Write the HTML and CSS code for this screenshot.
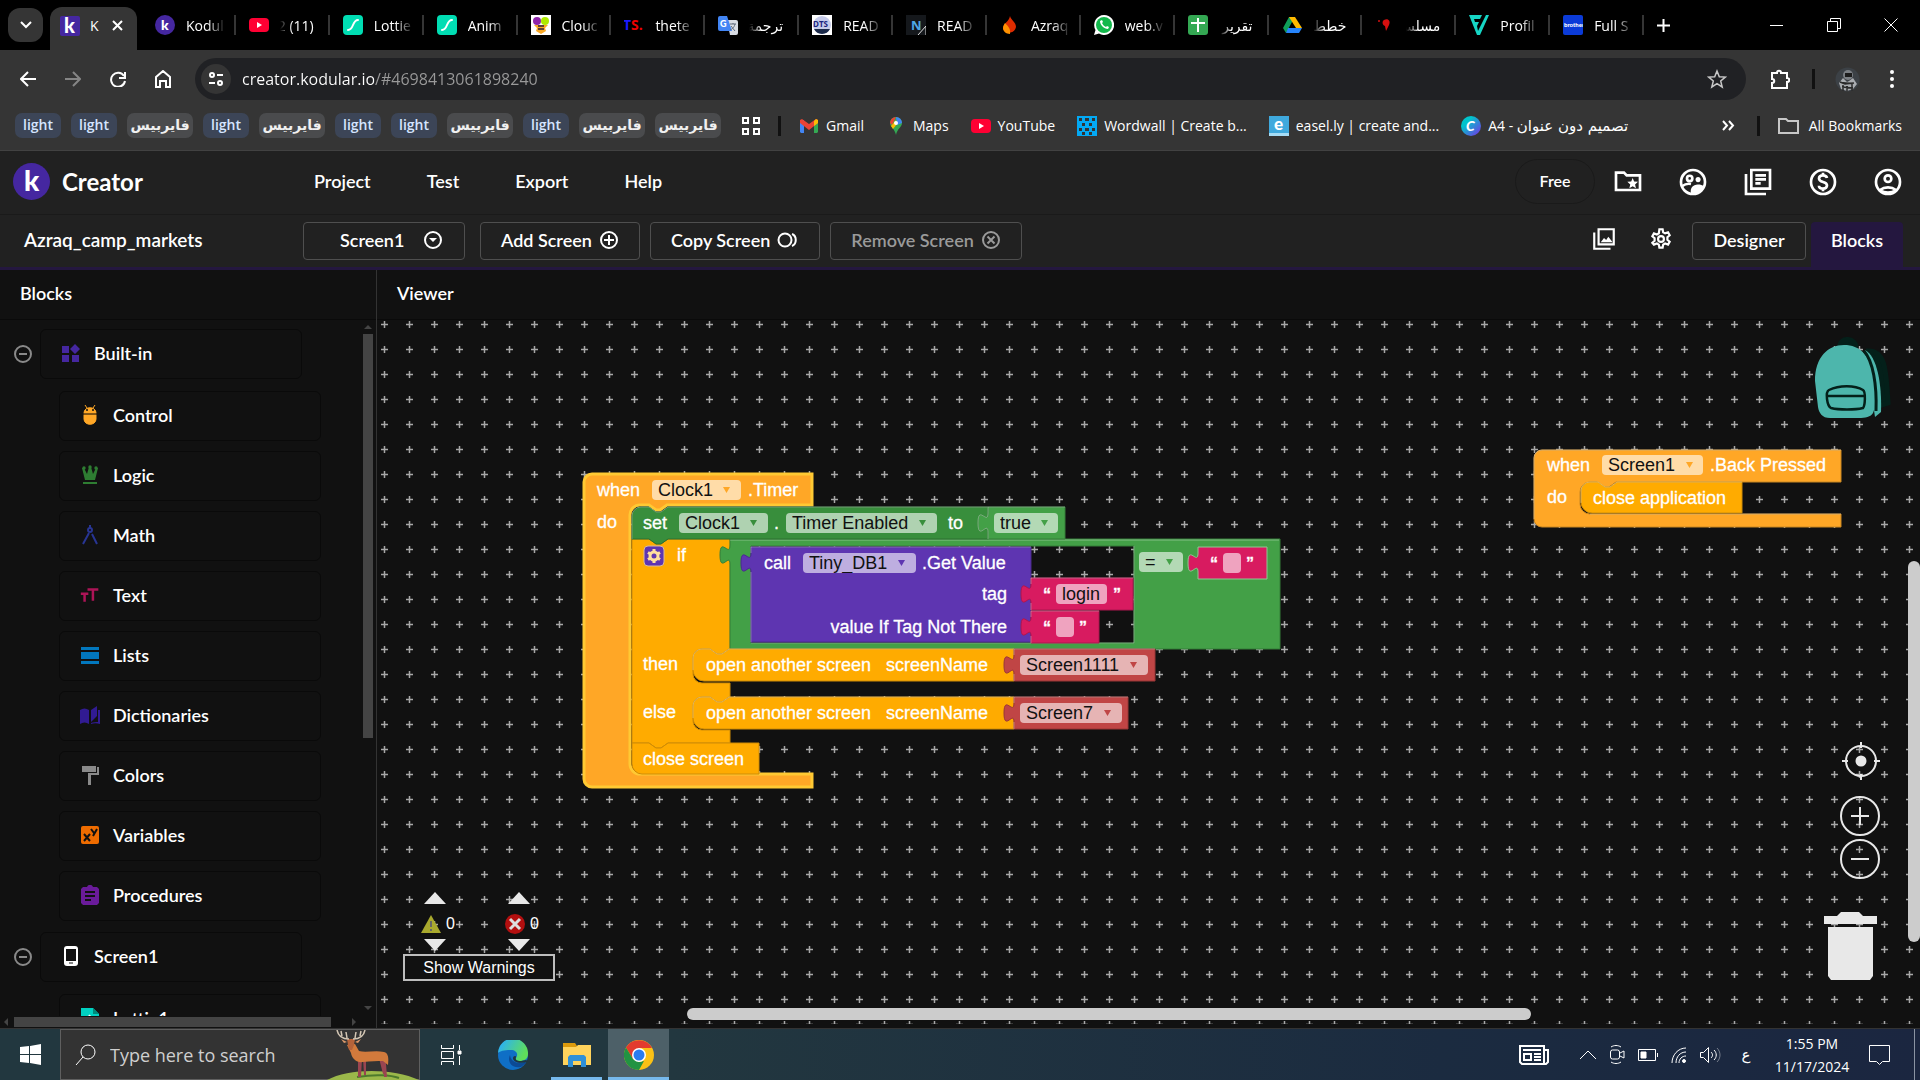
FILE: index.html
```html
<!DOCTYPE html>
<html lang="en">
<head>
  <meta charset="UTF-8">
  <meta name="viewport" content="width=device-width, initial-scale=1.0">
  <title>Kodular Creator</title>
  <link rel="stylesheet" href="styles.css">
</head>
<body>

  <!-- Browser tabs -->
  <div class="tabstrip">
    <button class="tab-search" aria-label="Search tabs"><svg width="12" height="8" viewBox="0 0 12 8" class="line"><path d="M1 1l5 5 5-5"/></svg></button>
    <button class="tab active">
      <svg width="20" height="20" viewBox="0 0 20 20"><rect width="20" height="20" rx="2" fill="#4527a0"/><text x="4" y="17" class="mark" font-size="20">k</text></svg>
      <span class="tab-title">K</span>
      <svg width="11" height="11" viewBox="0 0 11 11" class="line"><path d="M1 1l9 9M10 1l-9 9"/></svg>
    </button>
    <div class="tabs">
      <button class="tab"><svg width="20" height="20" viewBox="0 0 20 20"><circle cx="10" cy="10" r="10" fill="#4527a0"/><text x="6" y="15" class="mark" font-size="14">k</text></svg><span class="tab-title">Kodul</span></button>
      <button class="tab"><svg width="20" height="20" viewBox="0 0 20 20"><rect y="3" width="20" height="14" rx="4" fill="#ff0033"/><path d="M8 7l5 3-5 3z" fill="#fff"/></svg><span class="tab-title rtl"><bdi>2 (11)</bdi></span></button>
      <button class="tab"><svg width="20" height="20" viewBox="0 0 20 20"><rect width="20" height="20" rx="4" fill="#00ddb3"/><path d="M5 15c6 0 4-10 10-10" stroke="#fff" stroke-width="2" stroke-linecap="round" fill="none"/></svg><span class="tab-title">Lottie</span></button>
      <button class="tab"><svg width="20" height="20" viewBox="0 0 20 20"><rect width="20" height="20" rx="4" fill="#00ddb3"/><path d="M5 15c6 0 4-10 10-10" stroke="#fff" stroke-width="2" stroke-linecap="round" fill="none"/></svg><span class="tab-title">Anim</span></button>
      <button class="tab"><svg width="20" height="20" viewBox="0 0 20 20"><rect width="20" height="20" fill="#fff"/><circle cx="6" cy="6" r="4" fill="#8e24aa"/><circle cx="14" cy="6" r="4" fill="#aeea00"/><path d="M3 10h14l-3 3 1 3-5 3-5-3 1-3z" fill="#f9a825"/><path d="M7 11h6M7 14h6" stroke="#5d4037" stroke-width="2"/></svg><span class="tab-title">Clouc</span></button>
      <button class="tab"><svg width="20" height="20" viewBox="0 0 20 20"><text x="-1" y="15" font-size="14" font-weight="bold" fill="#1a1aff">T</text><text x="7" y="15" font-size="14" font-weight="bold" fill="#e00">S.</text></svg><span class="tab-title">thete</span></button>
      <button class="tab"><svg width="20" height="20" viewBox="0 0 20 20"><path d="M9 5h9a2 2 0 0 1 2 2v11a2 2 0 0 1-2 2h-6z" fill="#d8dce3"/><path d="M2 1h7l5 15H2a2 2 0 0 1-2-2V3a2 2 0 0 1 2-2z" fill="#4285f4"/><text x="2" y="12" class="mark" font-size="9">G</text><path d="M12 9h6M15 8v1M17 9c-1 4-3 5-5 6M13 11l4 5" stroke="#5f6b7a" fill="none"/></svg><span class="tab-title rtl"><bdi>ترجمة</bdi></span></button>
      <button class="tab"><svg width="20" height="20" viewBox="0 0 20 20"><rect width="20" height="20" fill="#fff"/><circle cx="10" cy="10" r="9" fill="#c5cae9"/><path d="M2 14h16a9 9 0 0 1-16 0z" fill="#1b2a4a"/><text x="1" y="12" font-size="8" font-weight="bold" fill="#1a237e">DTS</text></svg><span class="tab-title">READ</span></button>
      <button class="tab"><svg width="20" height="20" viewBox="0 0 20 20"><rect width="20" height="20" fill="#15181c"/><text x="5" y="15" font-size="13" font-weight="bold" fill="#4fa8e8">N</text><path d="M12 20l8-9v9" stroke="#ddd" fill="none"/></svg><span class="tab-title">READ</span></button>
      <button class="tab"><svg width="20" height="20" viewBox="0 0 20 20"><path d="M10 1c1 4 6 6 6 11a7 7 0 0 1-13 2c0-6 6-7 7-13z" fill="#dd2c00"/><path d="M5 8c3 3 6 6 5 11-4 0-7-3-7-6 0-2 1-3 2-5z" fill="#ff9100"/></svg><span class="tab-title">Azraq</span></button>
      <button class="tab"><svg width="20" height="20" viewBox="0 0 20 20"><path d="M10 0a10 10 0 1 1-5 18.600L0 20l1.500-5A10 10 0 0 1 10 0z" fill="#fff"/><circle cx="10" cy="10" r="8" fill="#12b84b"/><path d="M6 6c0 4 4 8 8 8l1-2-2-1-1 1c-2-1-3-2-4-4l1-1-1-2z" fill="#fff"/></svg><span class="tab-title">web.v</span></button>
      <button class="tab"><svg width="20" height="20" viewBox="0 0 20 20"><rect width="20" height="20" rx="3" fill="#34a853"/><path d="M10 3v14M3 8h14" stroke="#fff" stroke-width="2"/></svg><span class="tab-title rtl"><bdi>تقرير</bdi></span></button>
      <button class="tab"><svg width="20" height="20" viewBox="0 0 20 20"><path d="M7 2h6l-3 5-6 11-3-5z" fill="#0f9d58"/><path d="M7 2h6l7 11h-6z" fill="#ffba00"/><path d="M6 13h14l-3 5H4z" fill="#2684fc"/></svg><span class="tab-title rtl"><bdi>خطط</bdi></span></button>
      <button class="tab"><svg width="20" height="20" viewBox="0 0 20 20"><path d="M9 5c4-2 7 1 5 5l-3 6-1-5c-3-1-3-5-1-6z" fill="#d50f0f"/><circle cx="4" cy="6" r="1" fill="#d50f0f"/></svg><span class="tab-title rtl"><bdi>مسلس</bdi></span></button>
      <button class="tab"><svg width="20" height="20" viewBox="0 0 20 20"><path d="M0 0h13l-2 4H5l1 3h4l-2 4 1 5 8-16h3l-9 20H8z" fill="#16d6c5"/></svg><span class="tab-title">Profil</span></button>
      <button class="tab"><svg width="20" height="20" viewBox="0 0 20 20"><rect width="20" height="20" rx="2" fill="#0b3bd8"/><text x="1" y="12" class="mark" font-size="6">brother</text></svg><span class="tab-title">Full S</span></button>
    </div>
    <button class="new-tab" aria-label="New tab"><svg width="13" height="13" viewBox="0 0 13 13" class="line"><path d="M6.500 0v13M0 6.500h13"/></svg></button>
    <div class="window-buttons">
      <button aria-label="Minimize"><svg width="13" height="13" viewBox="0 0 13 13" class="thin"><path d="M0 6.500h13"/></svg></button>
      <button aria-label="Restore"><svg width="14" height="14" viewBox="0 0 14 14" class="thin"><path d="M.5 3.500h10v10H.5zM3.500 3V.5h10v10H11"/></svg></button>
      <button aria-label="Close"><svg width="14" height="14" viewBox="0 0 14 14" class="thin"><path d="M.5.5l13 13M13.500.5l-13 13"/></svg></button>
    </div>
  </div>

  <!-- Address bar -->
  <div class="toolbar">
    <button class="nav-btn" aria-label="Back"><svg width="16" height="16" viewBox="0 0 16 16" class="line"><path d="M16 8H2M8 1L1 8l7 7"/></svg></button>
    <button class="nav-btn dim" aria-label="Forward"><svg width="16" height="16" viewBox="0 0 16 16" class="line"><path d="M0 8h14M8 1l7 7-7 7"/></svg></button>
    <button class="nav-btn" aria-label="Reload"><svg width="16" height="16" viewBox="0 0 16 16" class="line"><path d="M14 5a7 7 0 1 0 1 5M15 1v6H9"/></svg></button>
    <button class="nav-btn" aria-label="Home"><svg width="16" height="18" viewBox="0 0 16 18" class="line"><path d="M1 7l7-6 7 6v10h-4v-6H5v6H1z"/></svg></button>
    <div class="omnibox">
      <button class="site-info" aria-label="Site information"><svg width="16" height="16" viewBox="0 0 16 16" class="line"><circle cx="4" cy="4" r="2"/><path d="M9 4h6M1 12h6"/><circle cx="12" cy="12" r="2"/></svg></button>
      <input class="url" type="text" aria-label="Address" value="creator.kodular.io/#4698413061898240">
      <button class="bare" aria-label="Bookmark"><svg width="20" height="20" viewBox="0 0 20 20" class="line star"><path d="M10 2l2.300 5.700 6 .4-4.600 3.900 1.500 6-5.200-3.300L4.800 18l1.500-6L1.700 8.100l6-.4z"/></svg></button>
    </div>
    <button class="bare ext" aria-label="Extensions"><svg width="20" height="21" viewBox="0 0 20 21" class="line"><path d="M2 4h5c0-3 4-3 4 0h6v5c3 0 3 4 0 4v6H2v-5c3 0 3-4 0-4z"/></svg></button>
    <span class="divider"></span>
    <button class="bare avatar" aria-label="Profile"><svg width="25" height="25" viewBox="0 0 25 25"><circle cx="12.500" cy="12.500" r="12" fill="#3c4146"/><path d="M4 16l4-5 4 4 2-1 4-3 4 6-4 5-6 2-6-2z" fill="#a9acb0"/><circle cx="13" cy="8" r="5" fill="#7b7f84"/><path d="M10 6h7v4h-7z" fill="#1c1c1c"/><path d="M8 24v-6M12 24v-5M17 24v-7M5 15l5 2 9-1M7 20l11 1" stroke="#2b2b2b" stroke-width="1.500"/></svg></button>
    <button class="bare" aria-label="Menu"><svg width="6" height="20" viewBox="0 0 6 20" fill="#fff"><circle cx="3" cy="3" r="2"/><circle cx="3" cy="10" r="2"/><circle cx="3" cy="17" r="2"/></svg></button>
  </div>

  <!-- Bookmarks -->
  <nav class="bookmarks">
    <a href="#" class="chip">light</a>
    <a href="#" class="chip">light</a>
    <a href="#" class="chip ar">فايربيس</a>
    <a href="#" class="chip">light</a>
    <a href="#" class="chip ar">فايربيس</a>
    <a href="#" class="chip">light</a>
    <a href="#" class="chip">light</a>
    <a href="#" class="chip ar">فايربيس</a>
    <a href="#" class="chip">light</a>
    <a href="#" class="chip ar">فايربيس</a>
    <a href="#" class="chip ar">فايربيس</a>
    <a href="#" class="apps" aria-label="Apps"><svg width="18" height="18" viewBox="0 0 18 18" class="line"><path d="M1 1h5v5H1zM12 1h5v5h-5zM1 12h5v5H1zM12 12h5v5h-5z"/></svg></a>
    <span class="divider"></span>
    <a href="#" class="bookmark"><svg width="20" height="20" viewBox="0 0 20 20"><path d="M1 4h4v13H2l-1-1z" fill="#4285f4"/><path d="M15 6l4-2v12l-1 1h-3z" fill="#34a853"/><path d="M1 4l2-1 7 5 7-5 2 1v3l-9 7-9-7z" fill="#ea4335"/><path d="M15 5l2-2 2 1v3l-4 3z" fill="#fbbc04"/></svg>Gmail</a>
    <a href="#" class="bookmark"><svg width="20" height="20" viewBox="0 0 20 20"><path d="M10 1a6 6 0 0 1 6 6c0 4-5 6-6 12C9 13 4 11 4 7a6 6 0 0 1 6-6z" fill="#34a853"/><path d="M10 1a6 6 0 0 1 6 6l-5 2z" fill="#4285f4"/><path d="M10 1L6 9 4 7a6 6 0 0 1 6-6z" fill="#ea4335"/><path d="M5 10l5-6 1 4-4 5z" fill="#fbbc04"/><circle cx="10" cy="7" r="2" fill="#fff"/></svg>Maps</a>
    <a href="#" class="bookmark"><svg width="20" height="20" viewBox="0 0 20 20"><rect y="3" width="20" height="14" rx="4" fill="#ff0033"/><path d="M8 7l5 3-5 3z" fill="#fff"/></svg>YouTube</a>
    <a href="#" class="bookmark"><svg width="20" height="20" viewBox="0 0 20 20"><rect width="20" height="20" fill="#03a9f4"/><path d="M2 2h3v3H2zM8 2h4v3H8zM15 2h3v3h-3zM5 7h3v3H5zM12 7h3v3h-3zM2 12h3v3H2zM8 12h4v3H8zM15 12h3v3h-3zM5 16h3v3H5zM12 16h3v3h-3z" fill="#333"/></svg>Wordwall | Create b...</a>
    <a href="#" class="bookmark"><svg width="20" height="20" viewBox="0 0 20 20"><rect width="20" height="20" fill="#3fa9dd"/><path d="M0 17h20v3H0z" fill="#a6dcf5"/><text x="5" y="14" class="mark" font-size="17">e</text></svg>easel.ly | create and...</a>
    <a href="#" class="bookmark"><svg width="20" height="20" viewBox="0 0 20 20"><defs><linearGradient id="canva" x1="0" y1="0" x2="1" y2="1"><stop offset=".3" stop-color="#00c4cc"/><stop offset="1" stop-color="#7d2ae8"/></linearGradient></defs><circle cx="10" cy="10" r="10" fill="url(#canva)"/><text x="5" y="15" class="mark" font-style="italic" font-size="14">C</text></svg><bdi>A4 - <span class="ar-text">تصميم دون عنوان</span></bdi></a>
    <button class="bare more" aria-label="More bookmarks"><svg width="13" height="11" viewBox="0 0 13 11" class="line"><path d="M1 1l4 4.500L1 10M7 1l4 4.500L7 10"/></svg></button>
    <span class="divider"></span>
    <a href="#" class="bookmark all"><svg width="21" height="17" viewBox="0 0 21 17" class="line soft"><path d="M1 2h7l2 2h10v12H1z"/></svg>All Bookmarks</a>
  </nav>

  <!-- Kodular header -->
  <header class="app-header">
    <a href="#" class="brand">
      <svg width="37" height="37" viewBox="0 0 37 37"><circle cx="18.500" cy="18.500" r="18.500" fill="#4527a0"/><text x="11" y="28" class="mark" font-size="28">k</text></svg>
      Creator
    </a>
    <nav class="menu">
      <a href="#">Project</a>
      <a href="#">Test</a>
      <a href="#">Export</a>
      <a href="#">Help</a>
    </nav>
    <button class="plan">Free</button>
    <div class="header-icons">
      <button aria-label="My projects"><svg width="32" height="32" viewBox="0 0 24 24" class="md"><path d="M3 5h6l2 2h10v11H3z"/><path d="M15.500 9l1.100 2.700 2.900.2-2.200 1.900.7 2.800-2.500-1.500-2.500 1.500.7-2.800-2.200-1.900 2.900-.2z" class="solid"/></svg></button>
      <button aria-label="Community"><svg width="32" height="32" viewBox="0 0 24 24" class="md"><circle cx="12" cy="12" r="9"/><circle cx="9.500" cy="9.300" r="2"/><circle cx="15.800" cy="10.200" r="1.900" class="solid"/><path d="M4 15c2-1.500 4-2 6.500-1.500"/><path d="M10.500 20.500c-1-4 1.500-6.700 5.100-6.700 2 0 3.500.5 4.400 1.200-1.500 4-5 6-9.500 5.500z" class="solid"/></svg></button>
      <button aria-label="Docs"><svg width="32" height="32" viewBox="0 0 24 24" class="md"><path d="M7 3h14v14H7zM3 6v15h15M10 7h8M10 10h8M10 13h4"/></svg></button>
      <button aria-label="Monetization"><svg width="32" height="32" viewBox="0 0 24 24" class="md"><circle cx="12" cy="12" r="9"/><path d="M15 9c-.3-1.400-1.400-2-3-2s-3 .8-3 2.400c0 3.400 6 1.800 6 5.100 0 1.600-1.300 2.500-3 2.500s-3-.8-3.100-2.200M12 5v2M12 17v2"/></svg></button>
      <button aria-label="Account"><svg width="32" height="32" viewBox="0 0 24 24" class="md"><circle cx="12" cy="12" r="9"/><circle cx="12" cy="9.500" r="2.500"/><path d="M6 18c3.500-2.700 8.500-2.700 12 0-3.500 2.600-8.500 2.600-12 0z"/></svg></button>
    </div>
  </header>

  <!-- Project bar -->
  <div class="project-bar">
    <h1 class="project-name">Azraq_camp_markets</h1>
    <div class="screen-picker">
      <select aria-label="Screen"><option>Screen1</option></select>
      <svg width="20" height="20" viewBox="0 0 20 20"><circle cx="10" cy="10" r="8" fill="none" stroke="#fff" stroke-width="2"/><path d="M6 8h8l-4 4z" fill="#fff"/></svg>
    </div>
    <button class="outlined">Add Screen <svg width="20" height="20" viewBox="0 0 20 20" class="line"><circle cx="10" cy="10" r="8"/><path d="M10 5v10M5 10h10"/></svg></button>
    <button class="outlined">Copy Screen <svg width="22" height="20" viewBox="0 0 22 20" class="line"><circle cx="8" cy="10" r="6.500"/><path d="M15 4c5 2 5 10 0 12"/></svg></button>
    <button class="outlined" disabled>Remove Screen <svg width="20" height="20" viewBox="0 0 20 20" class="line"><circle cx="10" cy="10" r="8"/><path d="M6.500 6.500l7 7M13.500 6.500l-7 7"/></svg></button>
    <div class="project-tools">
      <button class="tool" aria-label="Assets"><svg width="26" height="26" viewBox="0 0 24 24" class="md"><path d="M7 3h14v14H7zM3 6v15h15"/><path d="M9 15l3-4 2 2 2-3 4 5z" class="solid"/></svg></button>
      <button class="tool" aria-label="Settings"><svg width="26" height="26" viewBox="0 0 24 24" class="md"><path d="M10.500 3h3l.5 2.800 1.800 1 2.700-1 1.500 2.700-2.100 1.800v2.400l2.100 1.800-1.500 2.700-2.700-1-1.800 1-.5 2.800h-3l-.5-2.800-1.800-1-2.700 1L4 15.500l2.100-1.800v-2.400L4 9.500l1.500-2.700 2.700 1 1.800-1z"/><circle cx="12" cy="12" r="2.700"/></svg></button>
      <button class="outlined designer">Designer</button>
      <button class="blocks-tab">Blocks</button>
    </div>
  </div>

  <main class="main">
    <!-- Block drawers -->
    <aside class="palette">
      <h2 class="panel-title">Blocks</h2>
      <div class="tree-wrap">
        <div class="tree">
          <div class="branch">
            <button class="collapse" aria-label="Collapse Built-in"><svg width="18" height="18" viewBox="0 0 18 18"><circle cx="9" cy="9" r="8"/><path d="M5 9h8"/></svg></button>
            <button class="node"><svg width="20" height="20" viewBox="0 0 20 20" fill="#4527a0"><path d="M1 3h7v7H1zM1 12h7v7H1zM11 12h7v7h-7zM14 1l5 5-5 5-5-5z"/></svg>Built-in</button>
          </div>
          <div class="leaves">
            <button class="node"><svg width="20" height="20" viewBox="0 0 20 20"><path d="M4 8c0-7 12-7 12 0zM4 10h12v4c0 7-12 7-12 0zM5 0l2 3M15 0l-2 3" fill="#ffa726" stroke="#ffa726"/><circle cx="7" cy="5" r="1" fill="#111"/><circle cx="13" cy="5" r="1" fill="#111"/><path d="M3 9h14" stroke="#7a4f10"/></svg>Control</button>
            <button class="node"><svg width="20" height="20" viewBox="0 0 20 20" fill="#2e7d32"><path d="M2 3h2l3 6 2-7h2l2 7 3-6h2l-3 12H5zM3 17h14v2H3z"/><circle cx="4" cy="3" r="1.700"/><circle cx="10" cy="2" r="1.700"/><circle cx="16" cy="3" r="1.700"/></svg>Logic</button>
            <button class="node"><svg width="20" height="20" viewBox="0 0 20 20" fill="none" stroke="#283593" stroke-width="2"><circle cx="10" cy="5" r="2"/><path d="M10 0v3M9 8L3 19M12 9l5 10"/></svg>Math</button>
            <button class="node"><svg width="20" height="20" viewBox="0 0 24 24" fill="#ad1457"><path d="M9 4v3h5v12h3V7h5V4H9zM1 12h3v8h3v-8h3V9H1z"/></svg>Text</button>
            <button class="node"><svg width="20" height="20" viewBox="0 0 20 20" fill="#0277bd"><path d="M1 2h18v3H1zM1 7h18v7H1zM1 16h18v3H1z"/></svg>Lists</button>
            <button class="node"><svg width="20" height="20" viewBox="0 0 20 20" fill="#311b92"><path d="M0 5c3-2 6-2 9 0v14c-3-2-6-2-9 0zM11 5l6-4v10l-6 6zM18 5h2v14c-3-1-6-1-9 0v-1c2-1 5-1 7-1z"/></svg>Dictionaries</button>
            <button class="node"><svg width="20" height="20" viewBox="0 0 20 20" fill="#8a8a8a"><path d="M2 1h14v6H2zM17 2h2v8h-8v10H8V8h9z"/></svg>Colors</button>
            <button class="node"><svg width="20" height="20" viewBox="0 0 20 20"><rect x="1" y="1" width="18" height="18" rx="2" fill="#ef6c00"/><path d="M4 9l6 7M10 9l-6 7M11 4l3 4M17 4l-4 7" stroke="#111" stroke-width="2"/></svg>Variables</button>
            <button class="node"><svg width="20" height="20" viewBox="0 0 20 20"><path d="M3 2h4c1-3 5-3 6 0h4l2 2v14l-2 2H3l-2-2V4z" fill="#6a1b9a"/><path d="M5 7h10M5 11h10M5 15h6" stroke="#111" stroke-width="2"/></svg>Procedures</button>
          </div>
          <div class="branch">
            <button class="collapse" aria-label="Collapse Screen1"><svg width="18" height="18" viewBox="0 0 18 18"><circle cx="9" cy="9" r="8"/><path d="M5 9h8"/></svg></button>
            <button class="node"><svg width="20" height="20" viewBox="0 0 20 20"><rect x="3" width="14" height="20" rx="3" fill="#fff"/><path d="M5 3h10v12H5z" fill="#111"/><path d="M8 17h4" stroke="#111"/></svg>Screen1</button>
          </div>
          <div class="leaves">
            <button class="node"><svg width="20" height="20" viewBox="0 0 20 20"><path d="M1 0h12l6 6v14H1z" fill="#00d1c1"/><path d="M13 0v6h6z" fill="#00897b"/><path d="M6 14l4-7" stroke="#fff" stroke-width="2"/></svg>Lottie1</button>
          </div>
        </div>
        <div class="vscroll"><span class="arrow up"></span><span class="thumb"></span><span class="arrow down"></span></div>
      </div>
      <div class="hscroll"><span class="arrow left"></span><span class="thumb"></span><span class="arrow right"></span></div>
    </aside>

    <section class="viewer">
      <h2 class="panel-title">Viewer</h2>
      <div class="workspace">
        <svg class="canvas" width="100%" height="100%">
          <defs>
            <pattern id="grid" x="-5" y="-8" width="25" height="25" patternUnits="userSpaceOnUse">
              <path d="M9 12.500h7M12.500 9v7" stroke="#a8a8a8" stroke-width="1.500"/>
            </pattern>
          </defs>
          <rect width="100%" height="100%" fill="url(#grid)"/>

          <!-- when Clock1.Timer -->
          <g transform="translate(207 154)">
            <path class="event selected" d="M8 0H228V31H83l-7 5h-4l-7-5H56a10 10 0 0 0-10 10V290a10 10 0 0 0 10 10H228V313H8a8 8 0 0 1-8-8V8a8 8 0 0 1 8-8z"/>
            <text x="13" y="22">when</text>
            <foreignObject x="68" y="6" width="89" height="20"><select class="field" aria-label="Component"><option>Clock1</option></select></foreignObject>
            <path class="caret event" d="M139 13h7l-3.500 6z"/>
            <text x="164" y="22">.Timer</text>
            <text x="13" y="54">do</text>

            <!-- if / then / else -->
            <g transform="translate(48 65)">
              <path class="control" d="M0 0H17l7 5h5l7-5H98V110H97l-7 5h-5l-7-5H70a9 9 0 0 0-9 9V135a9 9 0 0 0 9 9H98V158H97l-7 5h-5l-7-5H70a9 9 0 0 0-9 9V182a9 9 0 0 0 9 9H98V204H36l-7 5h-5l-7-5H0z"/>
              <g transform="translate(12 7)">
                <rect width="20" height="20" rx="4" fill="#5e35b1" stroke="#d7b9a0"/>
                <circle cx="10" cy="10" r="4" fill="none" stroke="#ffdf9e" stroke-width="3"/>
                <path d="M10 3v3M10 14v3M4 6.500l2.500 1.500M13.500 12l2.500 1.500M4 13.500L6.500 12M13.500 8L16 6.500" stroke="#ffdf9e" stroke-width="3"/>
              </g>
              <text x="45" y="22">if</text>

              <g transform="translate(98 0)">
                <path class="logic" fill-rule="evenodd" d="M0 0H550V110H0V25c0-12-10 10-10-9s10 3 10-10zM21 7V104H404V7z"/>
                <path class="edge" d="M404 7V104H21M0 1H549"/>
                <g transform="translate(21 8)">
                  <path class="database" d="M0 0H280V95H0V25c0-12-10 10-10-9s10 3 10-10z"/>
                  <path class="edge" d="M0 95V25M0 6V0H280"/>
                  <text x="13" y="22">call</text>
                  <foreignObject x="52" y="6" width="113" height="20"><select class="field" aria-label="Component"><option>Tiny_DB1</option></select></foreignObject>
                  <path class="caret database" d="M147 13h7l-3.500 6z"/>
                  <text x="171" y="22">.Get Value</text>
                  <text x="256" y="53" text-anchor="end">tag</text>
                  <text x="256" y="86" text-anchor="end">value If Tag Not There</text>
                  <g transform="translate(280 31)">
                    <path class="string" d="M0 0H102V32H0V25c0-12-10 10-10-9s10 3 10-10z"/>
                    <path class="edge" d="M0 32V25M0 6V0H102"/>
                    <text class="quote" x="12" y="22">“</text>
                    <foreignObject x="25" y="6" width="51" height="20"><input class="field" type="text" aria-label="Text" value="login"></foreignObject>
                    <text class="quote" x="82" y="22">”</text>
                  </g>
                  <g transform="translate(280 64)">
                    <path class="string" d="M0 0H68V32H0V25c0-12-10 10-10-9s10 3 10-10z"/>
                    <path class="edge" d="M0 32V25M0 6V0H68"/>
                    <text class="quote" x="12" y="22">“</text>
                    <foreignObject x="25" y="6" width="18" height="20"><input class="field" type="text" aria-label="Text"></foreignObject>
                    <text class="quote" x="48" y="22">”</text>
                  </g>
                </g>
                <foreignObject x="409" y="13" width="44" height="20"><select class="field" aria-label="Operator"><option>=</option></select></foreignObject>
                <path class="caret logic" d="M436 20h7l-3.500 6z"/>
                <g transform="translate(468 8)">
                  <path class="string rim" d="M0 0H69V32H0V25c0-12-10 10-10-9s10 3 10-10z"/>
                  <text class="quote" x="12" y="22">“</text>
                  <foreignObject x="25" y="6" width="18" height="20"><input class="field" type="text" aria-label="Text"></foreignObject>
                  <text class="quote" x="48" y="22">”</text>
                </g>
              </g>

              <text x="11" y="131">then</text>
              <g transform="translate(61 110)">
                <path class="control" d="M0 9a9 9 0 0 1 9-9H17l7 5h5l7-5H321V32H11a11 11 0 0 1-11-11z"/>
                <path class="edge" d="M0 21V9a9 9 0 0 1 9-9H17l7 5h5l7-5H321"/>
                <text x="13" y="22">open another screen</text>
                <text x="193" y="22">screenName</text>
                <g transform="translate(321 0)">
                  <path class="screen" d="M0 0H141V32H0V25c0-12-10 10-10-9s10 3 10-10z"/>
                  <path class="edge" d="M0 32V25M0 6V0H141"/>
                  <foreignObject x="6" y="6" width="128" height="20"><select class="field" aria-label="Screen name"><option>Screen1111</option></select></foreignObject>
                  <path class="caret screen" d="M116 13h7l-3.500 6z"/>
                </g>
              </g>

              <text x="11" y="179">else</text>
              <g transform="translate(61 158)">
                <path class="control" d="M0 9a9 9 0 0 1 9-9H17l7 5h5l7-5H321V32H11a11 11 0 0 1-11-11z"/>
                <path class="edge" d="M0 21V9a9 9 0 0 1 9-9H17l7 5h5l7-5H321"/>
                <text x="13" y="22">open another screen</text>
                <text x="193" y="22">screenName</text>
                <g transform="translate(321 0)">
                  <path class="screen" d="M0 0H114V32H0V25c0-12-10 10-10-9s10 3 10-10z"/>
                  <path class="edge" d="M0 32V25M0 6V0H114"/>
                  <foreignObject x="6" y="6" width="102" height="20"><select class="field" aria-label="Screen name"><option>Screen7</option></select></foreignObject>
                  <path class="caret screen" d="M90 13h7l-3.500 6z"/>
                </g>
              </g>
            </g>

            <!-- set Clock1.TimerEnabled -->
            <g transform="translate(48 33)">
              <path class="setter" d="M0 9a9 9 0 0 1 9-9H17l7 5h5l7-5H356V32H36l-7 5h-5l-7-5H0z"/>
              <path class="edge" d="M0 32V9a9 9 0 0 1 9-9H17l7 5h5l7-5H356"/>
              <text x="11" y="22">set</text>
              <foreignObject x="47" y="6" width="89" height="20"><select class="field" aria-label="Component"><option>Clock1</option></select></foreignObject>
              <path class="caret setter" d="M118 13h7l-3.500 6z"/>
              <text x="142" y="22">.</text>
              <foreignObject x="154" y="6" width="151" height="20"><select class="field" aria-label="Property"><option>Timer Enabled</option></select></foreignObject>
              <path class="caret setter" d="M287 13h7l-3.500 6z"/>
              <text x="316" y="22">to</text>
              <g transform="translate(356 0)">
                <path class="logic" d="M0 0H77V32H0V25c0-12-10 10-10-9s10 3 10-10z"/>
                <path class="edge" d="M0 32V25c0-12-10 10-10-9s10 3 10-10V0H77"/>
                <foreignObject x="6" y="6" width="64" height="20"><select class="field" aria-label="Value"><option>true</option></select></foreignObject>
                <path class="caret logic" d="M53 13h7l-3.500 6z"/>
              </g>
            </g>

            <g transform="translate(48 269)">
              <path class="control" d="M0 0H17l7 5h5l7-5H127V31H10a10 10 0 0 1-10-10z"/>
              <text x="11" y="22">close screen</text>
            </g>
          </g>

          <!-- when Screen1.BackPressed -->
          <g transform="translate(1157 130)">
            <path class="event" d="M8 0H307V32H82l-7 5h-5l-7-5H56a10 10 0 0 0-10 10V54a10 10 0 0 0 10 10H307V77H8a8 8 0 0 1-8-8V8a8 8 0 0 1 8-8z"/>
            <path class="edge" d="M0 69V8a8 8 0 0 1 8-8H307M56 64H307"/>
            <text x="13" y="21">when</text>
            <foreignObject x="68" y="5" width="101" height="20"><select class="field" aria-label="Component"><option>Screen1</option></select></foreignObject>
            <path class="caret event" d="M152 12h7l-3.500 6z"/>
            <text x="176" y="21">.Back Pressed</text>
            <text x="13" y="53">do</text>
            <g transform="translate(47 32)">
              <path class="control" d="M0 9a9 9 0 0 1 9-9H17l7 5h5l7-5H161V31H11a11 11 0 0 1-11-11z"/>
              <path class="edge" d="M0 21V9a9 9 0 0 1 9-9H17l7 5h5l7-5H161"/>
              <text x="12" y="22">close application</text>
            </g>
          </g>
        </svg>

        <button class="backpack" aria-label="Backpack">
          <svg width="82" height="84" viewBox="0 0 82 84">
            <path d="M26 9c0-9 16-9 16 2M52 14c20-2 20 20 22 52l-12 4" fill="#04201a" stroke="#04201a" stroke-width="5"/>
            <path d="M51 13c12 6 17 34 16 62l-6 5" fill="#4db6ac"/>
            <path d="M1 44C1 20 14 8 30 8s26 10 28 30c3 20 4 32 1 38-2 4-8 5-14 5H16C8 81 5 76 4 70z" fill="#4db6ac"/>
            <path d="M50 14c9 10 13 34 12 60" fill="none" stroke="#04201a" stroke-width="3"/>
            <path d="M15 53c10-5 26-5 34 0 3 2 2 16 0 18-8 2-24 2-32 0-4-2-6-16-2-18zM12 59h39" fill="none" stroke="#04201a" stroke-width="2.500"/>
          </svg>
        </button>

        <div class="zoom">
          <button aria-label="Center"><svg width="40" height="40" viewBox="0 0 40 40"><circle cx="21" cy="20" r="15"/><path d="M21 1v6M21 33v6M2 20h6M34 20h6"/><circle cx="21" cy="20" r="4.500" fill="#e8e8e8"/></svg></button>
          <button aria-label="Zoom in"><svg width="40" height="40" viewBox="0 0 40 40"><circle cx="20" cy="20" r="19"/><path d="M11 20h18M20 11v18"/></svg></button>
          <button aria-label="Zoom out"><svg width="40" height="40" viewBox="0 0 40 40"><circle cx="20" cy="20" r="19"/><path d="M11 20h18"/></svg></button>
        </div>

        <button class="trash" aria-label="Trash"><svg width="54" height="68" viewBox="0 0 54 68" fill="#e8e8e8"><path d="M0 4h13l4-4h18l4 4h14v8H0zM4 15h45v49l-3 4H7l-3-4z"/></svg></button>

        <div class="warnings">
          <div class="counters">
            <div class="counter">
              <button class="step up" aria-label="Previous warning"></button>
              <span class="count"><svg width="20" height="20" viewBox="0 0 20 20"><path d="M10 1l10 18H0z" fill="#a9a92e"/><path d="M10 7v6M10 15v2" stroke="#666" stroke-width="2"/></svg>0</span>
              <button class="step down" aria-label="Next warning"></button>
            </div>
            <div class="counter">
              <button class="step up" aria-label="Previous error"></button>
              <span class="count"><svg width="20" height="20" viewBox="0 0 20 20"><circle cx="10" cy="10" r="10" fill="#b30f0f"/><path d="M5 5l10 10M15 5L5 15" stroke="#ddd" stroke-width="3"/></svg>0</span>
              <button class="step down" aria-label="Next error"></button>
            </div>
          </div>
          <button class="show-warnings">Show Warnings</button>
        </div>

        <span class="bar-y"></span>
        <span class="bar-x"></span>
      </div>
    </section>
  </main>

  <!-- Windows taskbar -->
  <footer class="taskbar">
    <button class="start" aria-label="Start"><svg width="21" height="21" viewBox="0 0 21 21" fill="#fff"><path d="M0 3l9-1v8H0zM10 2l11-2v10H10zM0 11h9v8l-9-1zM10 11h11v10l-11-2z"/></svg></button>
    <label class="search">
      <svg width="22" height="22" viewBox="0 0 22 22" class="thin"><circle cx="13" cy="8" r="7"/><path d="M8 13l-7 8"/></svg>
      <input type="text" placeholder="Type here to search" aria-label="Type here to search">
      <svg class="deer" width="92" height="50" viewBox="0 0 92 50">
        <path d="M0 50c22-12 66-12 92 0z" fill="#9bb84a"/>
        <path d="M30 47c18-3 34-2 42 1" stroke="#4d7a2c" stroke-width="2" fill="none"/>
        <path d="M31 28h4l-1 19h-3zM36 28h3v17h-2zM52 28l5-2 1 18h-2zM57 26h4l-2 8 1 13h-3z" fill="#9a4550"/>
        <path d="M20 15l8-1 4 7c7 2 16-1 25 1 4 1 5 5 4 13l-5-4c-6 0-12 0-20 1-6 1-11-3-12-9z" fill="#d27a3c"/>
        <path d="M20 9h8l-1 6-2 5h-3l-1-5z" fill="#b5633a"/>
        <path d="M20 12l-6-3 3 4zM28 12l6-3-3 4z" fill="#dc9a6c"/>
        <path d="M22 9C15 9 11 5 10 0M15 6l-1-5M20 8l-1-6M26 9c7 0 11-4 12-9M33 6l1-5M28 8l1-6" stroke="#d3c6b4" stroke-width="1.500" fill="none"/>
      </svg>
    </label>
    <button class="task" aria-label="Task view"><svg width="21" height="20" viewBox="0 0 21 20" class="thin"><path d="M.5 0v3.500h12V0M.5 20v-3.500h12V20M.5 6.500h12v7H.5zM18.500 0v5M18.500 11v9"/><path d="M17 6h3v3h-3z" fill="#fff"/></svg></button>
    <button class="task" aria-label="Edge">
      <svg width="30" height="30" viewBox="0 0 30 30"><defs><linearGradient id="edge" x1="0" y1="0" x2="1" y2=".4"><stop offset=".2" stop-color="#2fb4e9"/><stop offset="1" stop-color="#5fdf5a"/></linearGradient></defs>
      <circle cx="15" cy="15" r="15" fill="#0f6fc6"/><path d="M0 13a15 15 0 0 1 30 1c0 5-4 7-8 7-3 0-5-1-4-3 3-4 0-8-5-8-6 0-11 1-13 3z" fill="url(#edge)"/><path d="M12 15c-3 6 1 14 11 12a15 15 0 0 0 6-6c-6 3-16 3-17-6z" fill="#0c4a94"/><path d="M18 17c-1 3 1 4 5 4l5-1 2 1-1 1c-8 2-14 0-14-4 0-2 3-3 3-1z" fill="#20363f"/></svg>
    </button>
    <button class="task running" aria-label="File Explorer"><svg width="28" height="24" viewBox="0 0 28 24"><path d="M0 0h12l2 3v4H0z" fill="#dc9a0c"/><path d="M0 4h13l2-2h13v20H0z" fill="#ffd35c"/><path d="M5 24V14l2-2h14l2 2v10h-5v-6h-8v6z" fill="#2f90d8"/></svg></button>
    <button class="task running focused" aria-label="Chrome"><svg width="30" height="30" viewBox="0 0 30 30"><circle cx="15" cy="15" r="15" fill="#fbc116"/><path d="M2 7.500A15 15 0 0 1 28 8H15l-6 11z" fill="#e33b2e"/><path d="M2 7.500l7 11.500 6 3 5-1-5 9A15 15 0 0 1 2 7.500z" fill="#229342"/><circle cx="15" cy="15" r="7" fill="#fff"/><circle cx="15" cy="15" r="5.500" fill="#2a7cf0"/></svg></button>

    <div class="tray">
      <button class="news" aria-label="News"><svg width="30" height="20" viewBox="0 0 30 20" class="line"><path d="M1 1h24v18H3l-2-2zM25 5h4v12l-2 2h-3"/><path d="M4 5h18M15 9h7M15 12h7M15 15h7M5 9h7v6H5z"/></svg></button>
      <button aria-label="Show hidden icons"><svg width="16" height="9" viewBox="0 0 16 9" class="thin"><path d="M0 9l8-8 8 8"/></svg></button>
      <button aria-label="Meet now"><svg width="16" height="20" viewBox="0 0 16 20" class="thin"><rect x="1.500" y="5" width="9" height="9" rx="2"/><path d="M11 8l4-2v7l-4-2M2 2c3-2 7-2 10 0M2 17c3 2 7 2 10 0"/></svg></button>
      <button aria-label="Battery"><svg width="20" height="12" viewBox="0 0 20 12" class="thin"><path d="M.5.5h17v11H.5zM19.500 4v4"/><path d="M3 3h5v6H3z" fill="#fff"/></svg></button>
      <button aria-label="Network"><svg width="16" height="16" viewBox="0 0 16 16" class="thin"><path d="M1 16C1 8 7 1 15 1M5 16c0-6 4-11 10-11M8 16c0-4 3-7 7-7"/><circle cx="13" cy="14" r="1.500" fill="#fff"/></svg></button>
      <button aria-label="Volume"><svg width="21" height="16" viewBox="0 0 21 16" class="thin"><path d="M.5 5.500h3l5-5v15l-5-5h-3zM11 5c2 2 2 4 0 6M14 3c3 3 3 7 0 10"/><path d="M17 1c4 4 4 10 0 14" opacity=".4"/></svg></button>
      <button class="lang ar-text" aria-label="Arabic keyboard">ع</button>
      <button class="clock"><span>1:55 PM</span><span>11/17/2024</span></button>
      <button class="notify" aria-label="Notifications"><svg width="21" height="20" viewBox="0 0 21 20" class="thin"><path d="M.5.5h20v16h-7l-3 3-3-3h-7z"/></svg></button>
      <span class="show-desktop"></span>
    </div>
  </footer>

</body>
</html>
```

FILE: styles.css
```css
* {
  margin: 0;
  padding: 0;
  box-sizing: border-box;
}

body {
  display: flex;
  flex-direction: column;
  height: 100vh;
  overflow: hidden;
  background: #111;
  color: #fff;
  font-family: "Open Sans", "DejaVu Sans", sans-serif;
  font-size: 14px;
}

button,
input,
select {
  font: inherit;
  color: inherit;
  background: none;
  border: none;
  outline: none;
}

a {
  color: inherit;
  text-decoration: none;
}

svg {
  display: block;
  flex: none;
}

.line {
  fill: none;
  stroke: currentColor;
  stroke-width: 2;
}

.line.star {
  stroke: #c7c7c7;
  stroke-width: 1.5;
}

.line.soft {
  stroke: #c7c7c7;
}

.thin {
  fill: none;
  stroke: #fff;
  stroke-width: 1;
}

.mark {
  fill: #fff;
  font-family: Lato, sans-serif;
  font-weight: 900;
}

.ar-text {
  font-family: "DejaVu Sans", sans-serif;
  font-size: 15px;
}

.bare {
  display: flex;
}

/* tabs */
.tabstrip {
  display: flex;
  align-items: center;
  height: 50px;
  flex: none;
  padding-right: 1px;
  background: #000;
}

.tab-search {
  display: flex;
  align-items: center;
  justify-content: center;
  width: 35px;
  height: 34px;
  margin-left: 8px;
  border-radius: 12px;
  background: #353535;
}

.tabs {
  display: flex;
  flex: 1;
  min-width: 0;
  margin-left: 5px;
}

.tab {
  position: relative;
  display: flex;
  flex: 1;
  align-items: center;
  min-width: 0;
  height: 20px;
  padding: 0 8px 0 13px;
  gap: 11px;
}

.tabs .tab::after {
  content: "";
  position: absolute;
  right: 0;
  top: 0;
  width: 2px;
  height: 20px;
  background: #353535;
}

.tab-title {
  flex: 1;
  min-width: 0;
  white-space: nowrap;
  text-align: left;
  mask-image: linear-gradient(to right, #000 50%, transparent 95%);
}

.tab-title.rtl {
  display: flex;
  justify-content: flex-end;
  padding-right: 8px;
  mask-image: linear-gradient(to left, #000 70%, transparent);
}

.tab.active {
  flex: none;
  width: 87px;
  height: 43px;
  margin-left: 7px;
  align-self: flex-end;
  padding: 0 14px 6px 10px;
  gap: 10px;
  border-radius: 12px 12px 0 0;
  background: #353535;
}

.tab.active .tab-title {
  mask-image: none;
}

.new-tab {
  display: flex;
  width: 34px;
  height: 36px;
  align-items: center;
  justify-content: center;
  margin-left: 2px;
}

.window-buttons {
  display: flex;
  margin-left: 68px;
}

.window-buttons button {
  display: flex;
  align-items: center;
  justify-content: center;
  width: 57px;
  height: 36px;
}

/* address bar */
.toolbar {
  display: flex;
  align-items: center;
  height: 58px;
  flex: none;
  padding: 0 25px 0 5px;
  background: #353535;
}

.nav-btn {
  display: flex;
  align-items: center;
  justify-content: center;
  width: 45px;
  height: 40px;
}

.dim {
  color: #858585;
}

.omnibox {
  display: flex;
  align-items: center;
  flex: 1;
  height: 42px;
  margin-left: 10px;
  padding: 0 19px 0 6px;
  border-radius: 21px;
  background: #202124;
}

.site-info {
  display: flex;
  align-items: center;
  justify-content: center;
  width: 30px;
  height: 30px;
  border-radius: 50%;
  background: #353535;
}

.url {
  flex: 1;
  margin-left: 11px;
  font-size: 16px;
  color: transparent;
  background: linear-gradient(to right, #fff 132px, #9a9a9a 132px);
  background-clip: text;
}

.divider {
  width: 3px;
  height: 20px;
  background: #111;
}

.ext {
  margin: 0 22px 0 24px;
}

.avatar {
  margin: 0 29px 0 20px;
}

/* bookmarks */
.bookmarks {
  display: flex;
  align-items: center;
  height: 43px;
  flex: none;
  padding: 0 18px 7px 15px;
  background: #353535;
  border-bottom: 1px solid #424242;
}

.chip {
  width: 46px;
  height: 25px;
  margin-right: 10px;
  border-radius: 7px;
  background: #3c4557;
  color: #d5e5ff;
  font-weight: 600;
  line-height: 24px;
  text-align: center;
}

.chip.ar {
  width: 66px;
  background: #4a4b4d;
  color: #f0f0f0;
  font-family: "DejaVu Sans", sans-serif;
  font-weight: bold;
  font-size: 14px;
}

.apps {
  margin: 0 18px 0 11px;
}

.bookmark {
  display: flex;
  align-items: center;
  gap: 7px;
  margin-left: 18px;
  margin-right: 4px;
  white-space: nowrap;
}

.more {
  margin: 0 22px 0 auto;
}

.bookmark.all {
  gap: 10px;
  margin-right: 0;
}

/* app header */
.app-header {
  display: flex;
  align-items: center;
  height: 64px;
  flex: none;
  padding: 0 16px 2px 13px;
  background: #212121;
  border-bottom: 1px solid #1a1a1a;
  font-family: Lato, sans-serif;
}

.brand {
  display: flex;
  align-items: center;
  gap: 12px;
  width: 273px;
  font-size: 24px;
  font-weight: bold;
  line-height: 34px;
}

.menu {
  display: flex;
  flex: 1;
}

.menu a {
  padding: 0 28px 2px;
  font-size: 18px;
  font-weight: 600;
}

.plan {
  width: 80px;
  height: 45px;
  padding-bottom: 2px;
  border: 1px solid #1a1a1a;
  border-radius: 23px;
  font-size: 16px;
  font-weight: 600;
}

.header-icons {
  display: flex;
  gap: 33px;
  margin-left: 17px;
}

.header-icons button,
.tool {
  display: flex;
}

.md {
  fill: none;
  stroke: #fff;
  stroke-width: 2;
}

.md .solid {
  fill: #fff;
  stroke: none;
}

/* project bar */
.project-bar {
  display: flex;
  height: 55px;
  flex: none;
  padding: 7px 17px 0 24px;
  background: #212121;
  border-bottom: 3px solid #24173f;
  font-family: Lato, sans-serif;
  font-size: 18px;
}

.project-name {
  width: 279px;
  font-size: 19px;
  font-weight: 600;
  line-height: 36px;
}

.screen-picker {
  position: relative;
  width: 162px;
  margin-right: 15px;
}

.screen-picker select {
  width: 100%;
  height: 38px;
  padding-left: 36px;
  padding-bottom: 2px;
  border: 1px solid #4f4f4f;
  border-radius: 4px;
  appearance: none;
  font-weight: 600;
}

.screen-picker svg {
  position: absolute;
  top: 8px;
  right: 22px;
  pointer-events: none;
}

.outlined {
  display: flex;
  align-items: center;
  justify-content: center;
  gap: 7px;
  height: 38px;
  padding: 0 20px 2px;
  margin-right: 10px;
  border: 1px solid #4f4f4f;
  border-radius: 4px;
  font-weight: 600;
  white-space: nowrap;
}

.outlined:disabled {
  color: #9a9a9a;
}

.project-tools {
  display: flex;
  margin-left: auto;
}

.tool {
  height: 34px;
  align-items: center;
  margin-right: 31px;
}

.tool + .tool {
  margin-right: 18px;
}

.designer {
  width: 114px;
  margin-right: 5px;
}

.blocks-tab {
  width: 92px;
  height: 45px;
  padding-bottom: 10px;
  border-radius: 4px 4px 0 0;
  background: #24173f;
  font-weight: 600;
}

/* panels */
.main {
  display: flex;
  flex: 1;
  min-height: 0;
  border-bottom: 1px solid #333;
}

.panel-title {
  height: 50px;
  flex: none;
  padding-left: 20px;
  border-bottom: 1px solid #0a0a0a;
  font-family: Lato, sans-serif;
  font-size: 18px;
  font-weight: 600;
  line-height: 46px;
}

.palette {
  display: flex;
  flex-direction: column;
  width: 377px;
  flex: none;
  border-right: 1px solid #333;
}

.tree-wrap {
  display: flex;
  flex: 1;
  min-height: 0;
}

.tree {
  flex: 1;
  overflow: hidden;
  padding-top: 9px;
  font-family: Lato, sans-serif;
}

.branch {
  display: flex;
  align-items: center;
  padding-left: 14px;
}

.leaves {
  display: flex;
  flex-direction: column;
  gap: 10px;
  padding: 12px 0 11px 59px;
}

.collapse {
  display: flex;
  width: 26px;
}

.collapse svg {
  fill: none;
  stroke: #8a8a8a;
  stroke-width: 2;
}

.node {
  display: flex;
  align-items: center;
  gap: 13px;
  width: 262px;
  height: 50px;
  flex: none;
  padding: 0 0 3px 20px;
  border: 1px solid #0a0a0a;
  border-radius: 6px;
  font-size: 18px;
  font-weight: 600;
}

.vscroll {
  display: flex;
  flex-direction: column;
  align-items: center;
  width: 16px;
  padding: 5px 0 6px;
}

.vscroll .thumb {
  width: 10px;
  height: 404px;
  margin: 5px 0 auto;
  background: #444;
}

.hscroll {
  display: flex;
  align-items: center;
  height: 12px;
  flex: none;
  padding: 0 20px 0 4px;
}

.hscroll .thumb {
  width: 317px;
  height: 10px;
  margin: 0 auto 0 6px;
  background: #444;
}

.arrow {
  border: 4px solid transparent;
}

.arrow.up {
  border-top: 0;
  border-bottom-color: #444;
}

.arrow.down {
  border-bottom: 0;
  border-top-color: #444;
}

.arrow.left {
  border-left: 0;
  border-right-color: #444;
}

.arrow.right {
  border-right: 0;
  border-left-color: #444;
}

.viewer {
  display: flex;
  flex-direction: column;
  flex: 1;
  min-width: 0;
}

/* blocks workspace */
.workspace {
  position: relative;
  flex: 1;
  min-height: 0;
  margin-bottom: 4px;
  overflow: hidden;
  font-family: "Liberation Sans", Arial, sans-serif;
}

.canvas text {
  fill: #fff;
  stroke: #fff;
  stroke-width: 0.3px;
  font-size: 18px;
}

.canvas .quote {
  font-size: 16px;
  font-weight: bold;
}

.event {
  fill: #ffa726;
  stroke: #c98722;
}

.event.selected {
  stroke: #ffc933;
  stroke-width: 3;
}

.control {
  fill: #ffab00;
  stroke: #cf8c06;
}

.setter {
  fill: #388e3c;
  stroke: #2c7030;
}

.logic {
  fill: #43a047;
  stroke: #357f39;
}

.database {
  fill: #5e35b1;
  stroke: #4a2a8d;
}

.string {
  fill: #d81b60;
  stroke: #ad174e;
}

.string.rim {
  stroke: #8fc992;
}

.screen {
  fill: #c04545;
  stroke: #993737;
}

.edge {
  fill: none;
  stroke: rgba(255, 255, 255, 0.35);
}

.caret {
  stroke: none;
  pointer-events: none;
}

.field {
  display: block;
  width: 100%;
  height: 20px;
  padding: 0 6px;
  border-radius: 4px;
  background: rgba(255, 255, 255, 0.6);
  color: #111;
  font-family: "Liberation Sans", Arial, sans-serif;
  font-size: 18px;
  line-height: 20px;
  appearance: none;
}

.backpack {
  position: absolute;
  top: 17px;
  right: 24px;
}

.zoom {
  position: absolute;
  right: 40px;
  bottom: 145px;
  display: flex;
  flex-direction: column;
  gap: 3px;
}

.zoom button:first-child {
  margin-bottom: 12px;
}

.zoom svg {
  fill: none;
  stroke: #e8e8e8;
  stroke-width: 2;
}

.trash {
  position: absolute;
  right: 42px;
  bottom: 44px;
}

.warnings {
  position: absolute;
  left: 26px;
  bottom: 43px;
  font-size: 16px;
}

.counters {
  display: flex;
  gap: 40px;
  padding: 0 0 3px 19px;
}

.counter {
  display: flex;
  flex-direction: column;
  width: 44px;
}

.count {
  display: flex;
  align-items: center;
  gap: 5px;
  height: 35px;
  padding-top: 4px;
  margin-left: -1px;
}

.step {
  width: 22px;
  border: 11px solid transparent;
  margin-left: 2px;
}

.step.up {
  border-top: 0;
  border-bottom: 12px solid #e8e8e8;
}

.step.down {
  border-bottom: 0;
  border-top: 12px solid #e8e8e8;
}

.show-warnings {
  width: 152px;
  height: 27px;
  border: 2px solid #bdbdbd;
  background: #111;
}

.bar-y {
  position: absolute;
  right: 0;
  top: 241px;
  bottom: 82px;
  width: 12px;
  border-radius: 6px;
  background: #ccc;
}

.bar-x {
  position: absolute;
  left: 310px;
  right: 389px;
  bottom: 4px;
  height: 12px;
  border-radius: 6px;
  background: #ccc;
}

/* taskbar */
.taskbar {
  display: flex;
  height: 51px;
  flex: none;
  background: linear-gradient(to right, #22373f 35%, #1b2b40 75%, #1b2640);
}

.taskbar button {
  display: flex;
  align-items: center;
  justify-content: center;
}

.start {
  width: 60px;
}

.search {
  display: flex;
  align-items: center;
  width: 360px;
  padding-left: 14px;
  border: 1px solid #5f5f5f;
  background: #333;
}

.search input {
  flex: 1;
  min-width: 0;
  margin-left: 13px;
  font-size: 18px;
}

.search input::placeholder {
  color: #cfcfcf;
}

.task {
  width: 62px;
}

.running {
  width: 51px;
  margin: 0 6px 0 7px;
  border-bottom: 3px solid #76b9ed;
  padding-top: 3px;
}

.running.focused {
  width: 61px;
  margin: 0;
  background: #4d6068;
}

.tray {
  display: flex;
  gap: 13px;
  margin-left: auto;
}

.tray .news {
  margin-right: 18px;
}

.lang {
  width: 24px;
}

.taskbar .clock {
  flex-direction: column;
  width: 92px;
  margin-left: -5px;
  line-height: 23px;
}

.notify {
  margin: 0 11px 0 -2px;
}

.show-desktop {
  width: 6px;
  border-left: 1px solid #8a93a3;
}
```
